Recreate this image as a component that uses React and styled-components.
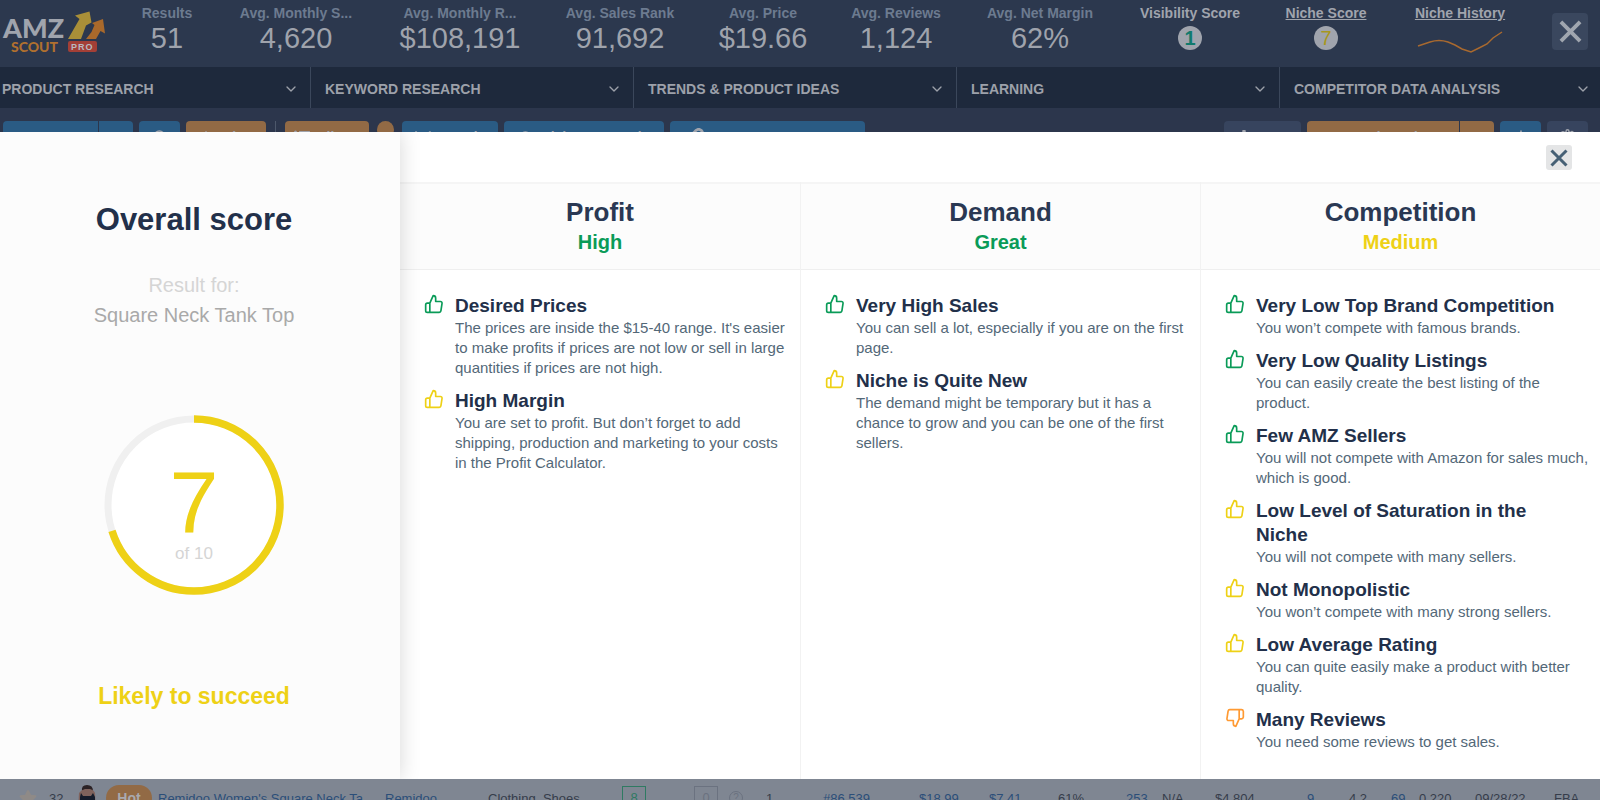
import React from 'react';
import styled, { createGlobalStyle } from 'styled-components';
import { FiChevronDown, FiThumbsDown, FiThumbsUp, FiSearch, FiPlus, FiSettings } from 'react-icons/fi';
import { FaListUl, FaChartBar, FaDownload, FaGraduationCap, FaLink, FaStar } from 'react-icons/fa';

const GREEN = '#0a9b58';
const YELLOW = '#eed116';
const ORANGE = '#ff9a33';

const stats = [
  { label: 'Results', value: '51' },
  { label: 'Avg. Monthly S...', value: '4,620' },
  { label: 'Avg. Monthly R...', value: '$108,191' },
  { label: 'Avg. Sales Rank', value: '91,692' },
  { label: 'Avg. Price', value: '$19.66' },
  { label: 'Avg. Reviews', value: '1,124' },
  { label: 'Avg. Net Margin', value: '62%' },
];

const menu = [
  'PRODUCT RESEARCH',
  'KEYWORD RESEARCH',
  'TRENDS & PRODUCT IDEAS',
  'LEARNING',
  'COMPETITOR DATA ANALYSIS',
];

const columns = [
  {
    title: 'Profit',
    status: 'High',
    color: GREEN,
    items: [
      {
        color: GREEN,
        title: 'Desired Prices',
        text: "The prices are inside the $15-40 range. It's easier to make profits if prices are not low or sell in large quantities if prices are not high.",
      },
      {
        color: YELLOW,
        title: 'High Margin',
        text: 'You are set to profit. But don’t forget to add shipping, production and marketing to your costs in the Profit Calculator.',
      },
    ],
  },
  {
    title: 'Demand',
    status: 'Great',
    color: GREEN,
    items: [
      {
        color: GREEN,
        title: 'Very High Sales',
        text: 'You can sell a lot, especially if you are on the first page.',
      },
      {
        color: YELLOW,
        title: 'Niche is Quite New',
        text: 'The demand might be temporary but it has a chance to grow and you can be one of the first sellers.',
      },
    ],
  },
  {
    title: 'Competition',
    status: 'Medium',
    color: YELLOW,
    items: [
      { color: GREEN, title: 'Very Low Top Brand Competition', text: 'You won’t compete with famous brands.' },
      { color: GREEN, title: 'Very Low Quality Listings', text: 'You can easily create the best listing of the product.' },
      { color: GREEN, title: 'Few AMZ Sellers', text: 'You will not compete with Amazon for sales much, which is good.' },
      { color: YELLOW, title: 'Low Level of Saturation in the Niche', text: 'You will not compete with many sellers.' },
      { color: YELLOW, title: 'Not Monopolistic', text: 'You won’t compete with many strong sellers.' },
      { color: YELLOW, title: 'Low Average Rating', text: 'You can quite easily make a product with better quality.' },
      { color: ORANGE, down: true, title: 'Many Reviews', text: 'You need some reviews to get sales.' },
    ],
  },
];

const Logo = () => (
  <svg width="108" height="56" viewBox="0 0 108 56" role="img" aria-label="AMZScout PRO">
    <text x="3" y="38" fontFamily="Lato, sans-serif" fontWeight="900" fontSize="27" fill="#a0a4ad">AMZ</text>
    <text x="11" y="52" fontFamily="Lato, sans-serif" fontWeight="900" fontSize="14" fill="#b0702f">SCOUT</text>
    <path d="M75 15.500 89.500 11.500 91.500 22.500 86 25.500 81 39H68L79.500 19z" fill="#a98f38" />
    <path d="M92 23 103 19 105 33.500 100.500 31 96 39H86L91.500 32 94.500 25z" fill="#a9692b" />
    <rect x="68" y="41" width="29" height="11" rx="2" fill="#a33f36" />
    <text x="71" y="50" fontFamily="Liberation Sans, sans-serif" fontWeight="700" fontSize="9" letterSpacing="1" fill="#b9bac0">PRO</text>
  </svg>
);

const Cross = ({ size, stroke }) => (
  <svg width={size} height={size} viewBox="0 0 24 24" aria-hidden="true">
    <path d="M2 2 22 22M22 2 2 22" stroke="currentColor" strokeWidth={stroke} fill="none" />
  </svg>
);

const Sparkline = () => (
  <svg width="86" height="26" viewBox="0 0 86 26" aria-hidden="true">
    <path
      d="M1 19 13 15Q22 12 31 15L38 18 45 22 54 25 62 21 70 17 76 11 85 5"
      fill="none"
      stroke="#a8692f"
      strokeWidth="1.500"
    />
  </svg>
);

const ScoreRing = ({ score }) => {
  const length = 2 * Math.PI * 86;
  return (
    <svg width="180" height="180" viewBox="0 0 180 180" aria-hidden="true">
      <circle cx="90" cy="90" r="86" fill="#fff" stroke="#f0f0f0" strokeWidth="7" />
      <circle
        cx="90"
        cy="90"
        r="86"
        fill="none"
        stroke={YELLOW}
        strokeWidth="7.500"
        strokeDasharray={`${(length * score) / 10} ${length}`}
        transform="rotate(-90 90 90)"
      />
    </svg>
  );
};

const Photo = () => (
  <svg width="20" height="26" viewBox="0 0 20 26" aria-hidden="true">
    <path d="M5 6Q4 0 10 0t6 6v4H5z" fill="#2b2225" />
    <path d="M2 8Q4 5 8 4h5q4 1 5 4l1 18H1z" fill="#7f625c" />
    <path d="M4 8l2 3h8l2-3 2 4v14H3V12z" fill="#161c2b" />
  </svg>
);

const App = () => {
  return (
    <Page>
      <GlobalStyle />

      {/* Summary bar */}
      <Header>
        <Logo />
        {stats.map((stat) => (
          <Stat key={stat.label}>
            <StatLabel>{stat.label}</StatLabel>
            <StatValue>{stat.value}</StatValue>
          </Stat>
        ))}
        <Stat>
          <StatLabel $bright>Visibility Score</StatLabel>
          <ScoreBadge $color="#117a6c" $bold>1</ScoreBadge>
        </Stat>
        <Stat>
          <StatLink href="#niche-score">Niche Score</StatLink>
          <ScoreBadge $color="#a8971d">7</ScoreBadge>
        </Stat>
        <Stat>
          <StatLink href="#niche-history">Niche History</StatLink>
          <Sparkline />
        </Stat>
        <HeaderClose type="button" aria-label="Close AMZScout">
          <Cross size={23} stroke={4} />
        </HeaderClose>
      </Header>

      {/* Main menu */}
      <Nav>
        {menu.map((label) => (
          <NavButton key={label} type="button">
            {label}
            <FiChevronDown size={16} />
          </NavButton>
        ))}
      </Nav>

      {/* Toolbar, mostly hidden under the panel */}
      <Toolbar>
        <ToolGroup>
          <ToolButton type="button" $width={95} aria-label="Search" />
          <ToolButton type="button" $width={34} aria-label="More searches" />
        </ToolGroup>
        <ToolButton type="button" $width={41}><FiSearch size={16} /></ToolButton>
        <ToolButton type="button" $width={80} $tone="orange"><FiPlus size={18} />View</ToolButton>
        <ToolDivider />
        <ToolButton type="button" $width={84} $tone="orange"><FaListUl size={16} />Filters</ToolButton>
        <ToolDot />
        <ToolButton type="button" $width={96}><FaChartBar size={17} />Trends</ToolButton>
        <ToolButton type="button" $width={160}><FiSearch size={14} />Niche Keywords</ToolButton>
        <ToolButton type="button" $width={195} $start aria-label="Linked products"><FaLink size={18} /></ToolButton>
        <Spacer />
        <ToolButton type="button" $width={77} $tone="grey"><FaDownload size={14} />CSV</ToolButton>
        <ToolGroup>
          <ToolButton type="button" $width={152} $tone="orange"><FaGraduationCap size={16} />Product Ideas</ToolButton>
          <ToolButton type="button" $width={34} $tone="orange" aria-label="More options" />
        </ToolGroup>
        <ToolButton type="button" $width={41} aria-label="Add"><FiPlus size={20} /></ToolButton>
        <ToolButton type="button" $width={41} $tone="grey" aria-label="Settings"><FiSettings size={17} /></ToolButton>
      </Toolbar>

      {/* Niche score panel */}
      <Panel>
        <Overall>
          <OverallTitle>Overall score</OverallTitle>
          <ResultLabel>Result for:</ResultLabel>
          <ResultName>Square Neck Tank Top</ResultName>
          <Dial>
            <ScoreRing score={7} />
            <DialText>
              <DialScore>7</DialScore>
              <DialTotal>of 10</DialTotal>
            </DialText>
          </Dial>
          <Verdict>Likely to succeed</Verdict>
        </Overall>

        <Details>
          <DetailsBar>
            <PanelClose type="button" aria-label="Close">
              <Cross size={18} stroke={4} />
            </PanelClose>
          </DetailsBar>
          <Columns>
            {columns.map((column) => (
              <Column key={column.title}>
                <ColumnHead>
                  <ColumnTitle>{column.title}</ColumnTitle>
                  <ColumnStatus $color={column.color}>{column.status}</ColumnStatus>
                </ColumnHead>
                <FactorList>
                  {column.items.map((item) => (
                    <Factor key={item.title} $color={item.color}>
                      {item.down ? <FiThumbsDown size={20} /> : <FiThumbsUp size={20} />}
                      <div>
                        <FactorTitle>{item.title}</FactorTitle>
                        <FactorText>{item.text}</FactorText>
                      </div>
                    </Factor>
                  ))}
                </FactorList>
              </Column>
            ))}
          </Columns>
        </Details>
      </Panel>

      {/* Product table, first visible row */}
      <TableClip>
        <Table>
          <tbody>
            <tr>
              <Cell $width={19} />
              <Cell $width={30}><FaStar size={18} color="#8f8a87" /></Cell>
              <Cell $width={28}>32</Cell>
              <Cell $width={29}><Photo /></Cell>
              <Cell $width={279}>
                <ProductCell>
                  <HotTag>Hot</HotTag>
                  <a href="#product">Remidoo Women's Square Neck Ta...</a>
                </ProductCell>
              </Cell>
              <Cell $width={103}><a href="#brand">Remidoo</a></Cell>
              <Cell $width={134}>Clothing, Shoes</Cell>
              <Cell $width={72}><BoxScore $color="#2f7a62">8</BoxScore></Cell>
              <Cell $width={35}><BoxScore $color="#6b7280">0</BoxScore></Cell>
              <Cell $width={37}><Hint>?</Hint></Cell>
              <Cell $width={57}>1</Cell>
              <Cell $width={96}><a href="#rank">#86,539</a></Cell>
              <Cell $width={70}><a href="#price">$18.99</a></Cell>
              <Cell $width={69}><a href="#net">$7.41</a></Cell>
              <Cell $width={68}>61%</Cell>
              <Cell $width={36}><a href="#sales">253</a></Cell>
              <Cell $width={53}>N/A</Cell>
              <Cell $width={92}>$4,804</Cell>
              <Cell $width={42}><a href="#sellers">9</a></Cell>
              <Cell $width={42}>4.2</Cell>
              <Cell $width={28}><a href="#lqs">69</a></Cell>
              <Cell $width={56}>0.220</Cell>
              <Cell $width={79}>09/28/22</Cell>
              <Cell $width={46}>FBA</Cell>
            </tr>
          </tbody>
        </Table>
      </TableClip>
    </Page>
  );
};

// Styled Components

const GlobalStyle = createGlobalStyle`
  * {
    box-sizing: border-box;
  }

  body {
    margin: 0;
    font-family: 'Liberation Sans', Arial, sans-serif;
    background: #2c384e;
  }

  button {
    border: none;
    padding: 0;
    font-family: inherit;
    cursor: pointer;
  }

  h1, h2, h3, p, ul {
    margin: 0;
    padding: 0;
  }
`;

const Page = styled.div`
  display: flex;
  flex-direction: column;
  min-height: 100vh;
  overflow: hidden;
`;

const Header = styled.header`
  display: grid;
  grid-template-columns: 120px 94fr 164fr 164fr 156fr 130fr 136fr 152fr 148fr 124fr 144fr 68px;
  height: 67px;
  background: #2c384e;
`;

const Stat = styled.div`
  display: flex;
  flex-direction: column;
  align-items: center;
  padding-top: 3px;
  white-space: nowrap;

  svg {
    margin-top: 4px;
  }
`;

const StatLabel = styled.span`
  font-size: 14px;
  font-weight: 700;
  line-height: 20px;
  color: ${({ $bright }) => ($bright ? '#a0a4ad' : '#6c7b90')};
`;

const StatLink = styled.a`
  font-size: 14px;
  font-weight: 700;
  line-height: 20px;
  color: #a0a4ad;
  text-decoration: underline;
`;

const StatValue = styled.span`
  font-size: 29px;
  line-height: 30px;
  color: #9fa3ac;
`;

const ScoreBadge = styled.span`
  display: flex;
  justify-content: center;
  align-items: center;
  width: 24px;
  height: 24px;
  margin-top: 3px;
  border-radius: 50%;
  background: #a0a4ad;
  font-size: 20px;
  font-weight: ${({ $bold }) => ($bold ? 700 : 400)};
  color: ${({ $color }) => $color};
`;

const HeaderClose = styled.button`
  display: flex;
  justify-content: center;
  align-items: center;
  align-self: start;
  width: 36px;
  height: 37px;
  margin: 13px 0 0 20px;
  border-radius: 4px;
  background: #3a475e;
  color: #a0a6af;
`;

const Nav = styled.nav`
  display: grid;
  grid-template-columns: repeat(5, 1fr);
  height: 41px;
  margin: 0 -3px 0 -12px;
  background: #1e293c;
`;

const NavButton = styled.button`
  display: flex;
  justify-content: space-between;
  align-items: center;
  padding: 3px 11px 0 14px;
  border-right: 1px solid #3b475b;
  background: none;
  font-size: 14px;
  font-weight: 700;
  color: #9da1aa;
`;

const Toolbar = styled.div`
  display: flex;
  align-items: flex-start;
  gap: 6px;
  height: 24px;
  padding: 13px 12px 0 3px;
  overflow: hidden;
  background: #2c364c;
`;

const ToolGroup = styled.div`
  display: flex;
  gap: 1px;
  border-radius: 4px;
  overflow: hidden;

  button {
    border-radius: 0;
  }
`;

const toolColors = {
  blue: '#2a5b84',
  orange: '#926a45',
  grey: '#37445e',
};

const ToolButton = styled.button`
  display: flex;
  justify-content: ${({ $start }) => ($start ? 'flex-start' : 'center')};
  align-items: center;
  gap: 8px;
  flex-shrink: 0;
  width: ${({ $width }) => $width}px;
  height: 32px;
  padding: 0 ${({ $start }) => ($start ? 16 : 0)}px;
  border-radius: 4px;
  background: ${({ $tone }) => toolColors[$tone || 'blue']};
  font-size: 14px;
  font-weight: 700;
  color: #a0a4ad;
`;

const ToolDivider = styled.span`
  width: 1px;
  height: 32px;
  margin: 0 3px;
  background: #4d586b;
`;

const ToolDot = styled.span`
  width: 17px;
  height: 17px;
  margin: 0 2px;
  border-radius: 50%;
  background: #926a45;
`;

const Spacer = styled.span`
  flex: 1;
`;

const Panel = styled.main`
  display: flex;
  flex: 1;
  background: #fff;
`;

const Overall = styled.section`
  display: flex;
  flex-direction: column;
  align-items: center;
  flex: 0 0 25%;
  padding: 68px 12px 0 0;
  background: #fcfcfc;
  box-shadow: 0 0 20px rgba(0, 0, 0, 0.16);
  z-index: 1;
  clip-path: inset(0 -30px 0 0);
`;

const OverallTitle = styled.h1`
  font-size: 31px;
  line-height: 40px;
  color: #22304a;
`;

const ResultLabel = styled.p`
  margin-top: 30px;
  font-size: 20px;
  line-height: 30px;
  color: #d5d5d5;
`;

const ResultName = styled.p`
  font-size: 20px;
  line-height: 30px;
  color: #a9a9a9;
`;

const Dial = styled.div`
  position: relative;
  width: 180px;
  height: 180px;
  margin-top: 85px;
`;

const DialText = styled.div`
  position: absolute;
  inset: 0;
  display: flex;
  flex-direction: column;
  align-items: center;
  padding-top: 46px;
`;

const DialScore = styled.span`
  font-size: 88px;
  line-height: 84px;
  color: ${YELLOW};
`;

const DialTotal = styled.span`
  font-size: 17px;
  line-height: 18px;
  color: #d5d5d5;
`;

const Verdict = styled.p`
  margin-top: 86px;
  font-size: 23px;
  font-weight: 700;
  line-height: 30px;
  color: ${YELLOW};
`;

const Details = styled.section`
  display: flex;
  flex-direction: column;
  flex: 1;
`;

const DetailsBar = styled.div`
  display: flex;
  justify-content: flex-end;
  height: 50px;
  padding: 13px 28px 0 0;
`;

const PanelClose = styled.button`
  display: flex;
  justify-content: center;
  align-items: center;
  width: 26px;
  height: 25px;
  border-radius: 3px;
  background: #e4e5e6;
  color: #466075;
`;

const Columns = styled.div`
  display: grid;
  grid-template-columns: repeat(3, 1fr);
  flex: 1;
`;

const Column = styled.article`
  border-left: 1px solid #f2f2f2;

  &:first-child {
    border-left: none;
  }
`;

const ColumnHead = styled.div`
  padding: 13px 0 12px;
  border-top: 2px solid #f5f5f5;
  border-bottom: 1px solid #efefef;
  background: #fcfcfc;
  text-align: center;
`;

const ColumnTitle = styled.h2`
  font-size: 26px;
  line-height: 30px;
  color: #2a3853;
`;

const ColumnStatus = styled.p`
  font-size: 20px;
  font-weight: 700;
  line-height: 30px;
  color: ${({ $color }) => $color};
`;

const FactorList = styled.ul`
  display: flex;
  flex-direction: column;
  gap: 11px;
  padding: 24px 8px 24px 24px;
  list-style: none;
`;

const Factor = styled.li`
  display: grid;
  grid-template-columns: 20px 1fr;
  gap: 11px;

  svg {
    color: ${({ $color }) => $color};
  }
`;

const FactorTitle = styled.h3`
  padding-right: 20px;
  font-size: 19px;
  line-height: 24px;
  color: #22304a;
`;

const FactorText = styled.p`
  font-size: 15px;
  line-height: 20px;
  color: #536878;
`;

const TableClip = styled.div`
  height: 21px;
  overflow: hidden;
  background: #7f8692;
`;

const Table = styled.table`
  width: 100%;
  table-layout: fixed;
  border-collapse: collapse;
`;

const Cell = styled.td`
  width: ${({ $width }) => $width}px;
  height: 38px;
  padding: 0;
  font-size: 13px;
  color: #363d4b;
  white-space: nowrap;

  a {
    color: #2b4e79;
    text-decoration: none;
  }

  svg {
    display: block;
  }
`;

const ProductCell = styled.div`
  display: flex;
  align-items: center;
  gap: 6px;
`;

const HotTag = styled.span`
  width: 46px;
  border-radius: 13px;
  background: #926a45;
  font-size: 14px;
  font-weight: 700;
  line-height: 26px;
  text-align: center;
  color: #a9a9ae;
`;

const BoxScore = styled.span`
  display: block;
  width: 24px;
  border: 1px solid ${({ $color }) => $color};
  line-height: 22px;
  text-align: center;
  color: ${({ $color }) => $color};
`;

const Hint = styled.span`
  display: block;
  width: 14px;
  border: 1px solid #6b7280;
  border-radius: 50%;
  font-size: 10px;
  line-height: 12px;
  text-align: center;
  color: #6b7280;
`;

export default App;
